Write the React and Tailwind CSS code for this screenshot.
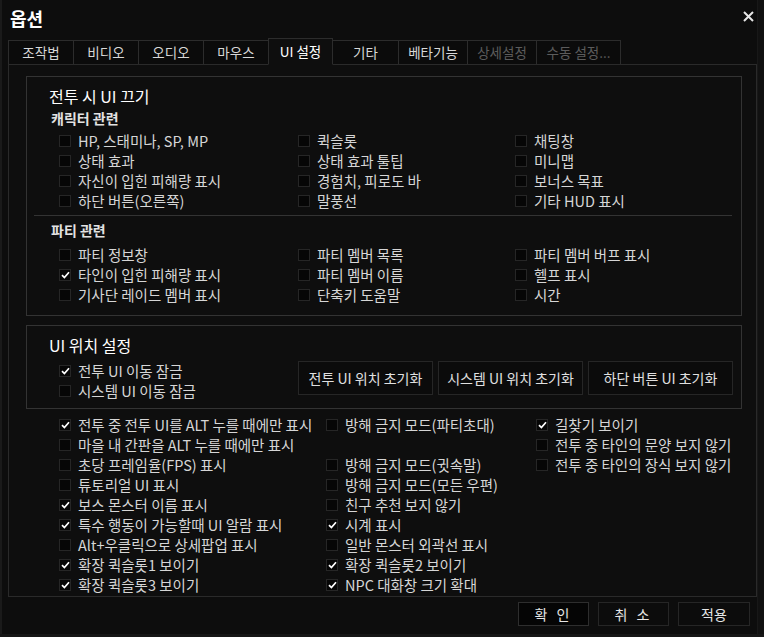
import React from 'react';

const FONT = { fontFamily: '"Noto Sans CJK KR", "Noto Sans", sans-serif' };

const tabs = [
  { label: '조작법', w: 'w-[66px]' },
  { label: '비디오', w: 'w-[66px]' },
  { label: '오디오', w: 'w-[66px]' },
  { label: '마우스', w: 'w-[66px]' },
  { label: 'UI 설정', w: 'w-[65px]', active: true },
  { label: '기타', w: 'w-[67px]' },
  { label: '베타기능', w: 'w-[70px]' },
  { label: '상세설정', w: 'w-[70px]', disabled: true },
  { label: '수동 설정...', w: 'w-[85px]', disabled: true },
];

const charRows = [
  ['HP, 스태미나, SP, MP', '퀵슬롯', '채팅창'],
  ['상태 효과', '상태 효과 툴팁', '미니맵'],
  ['자신이 입힌 피해량 표시', '경험치, 피로도 바', '보너스 목표'],
  ['하단 버튼(오른쪽)', '말풍선', '기타 HUD 표시'],
];

const partyRows = [
  ['파티 정보창', '파티 멤버 목록', '파티 멤버 버프 표시'],
  [['타인이 입힌 피해량 표시', true], '파티 멤버 이름', '헬프 표시'],
  ['기사단 레이드 멤버 표시', '단축키 도움말', '시간'],
];

// [label, checked] or null for an empty cell
const miscRows = [
  [['전투 중 전투 UI를 ALT 누를 때에만 표시', true], ['방해 금지 모드(파티초대)', false], ['길찾기 보이기', true]],
  [['마을 내 간판을 ALT 누를 때에만 표시', false], null, ['전투 중 타인의 문양 보지 않기', false]],
  [['초당 프레임율(FPS) 표시', false], ['방해 금지 모드(귓속말)', false], ['전투 중 타인의 장식 보지 않기', false]],
  [['튜토리얼 UI 표시', false], ['방해 금지 모드(모든 우편)', false], null],
  [['보스 몬스터 이름 표시', true], ['친구 추천 보지 않기', false], null],
  [['특수 행동이 가능할때 UI 알람 표시', true], ['시계 표시', true], null],
  [['Alt+우클릭으로 상세팝업 표시', false], ['일반 몬스터 외곽선 표시', false], null],
  [['확장 퀵슬롯1 보이기', true], ['확장 퀵슬롯2 보이기', true], null],
  [['확장 퀵슬롯3 보이기', true], ['NPC 대화창 크기 확대', true], null],
];

function Check({ label, checked }) {
  return (
    <div className="flex items-center h-[20px] gap-[7px] whitespace-nowrap">
      <span className="w-[12px] h-[12px] border border-[#262626] bg-[#060606] flex items-center justify-center shrink-0">
        {checked && (
          <svg width="9" height="8" viewBox="0 0 9 8">
            <path d="M1 4.2 L3.4 6.6 L8 1.2" stroke="#ffffff" strokeWidth="1.7" fill="none" />
          </svg>
        )}
      </span>
      <span className="text-[14.5px] text-[#d6d6d6] leading-[20px]">{label}</span>
    </div>
  );
}

function CheckGrid({ rows, cols }) {
  return (
    <div className={`grid ${cols}`}>
      {rows.flatMap((row, i) =>
        row.map((cell, j) => {
          const [label, checked] = Array.isArray(cell) ? cell : [cell, false];
          return <Check key={`${i}-${j}`} label={label} checked={checked} />;
        })
      )}
    </div>
  );
}

function Btn({ children, w }) {
  return (
    <button className={`${w} h-[34px] border border-[#262626] bg-[#0b0b0b] text-[14px] text-[#e0e0e0] flex items-center justify-center`}>
      {children}
    </button>
  );
}

export default function App() {
  return (
    <div style={FONT} className="w-[764px] h-[637px] bg-[#0d0d0d] flex flex-col relative overflow-hidden">
      {/* window frame edges */}
      <div className="absolute left-0 top-0 bottom-0 w-[2px] bg-[#1a1a1a]" />
      <div className="absolute right-0 top-0 bottom-0 w-[7px] bg-[#111111] border-l border-[#181818]" />
      <div className="absolute left-0 right-0 bottom-0 h-[3px] bg-[#161616]" />

      {/* title bar */}
      <div className="h-[39px] flex items-start justify-between pl-[10px] pr-[10px] pt-[6px]">
        <span className="text-[18px] text-white font-bold leading-[24px]">옵션</span>
        <svg width="11" height="11" viewBox="0 0 11 11" className="mt-[5px]">
          <path d="M1 1 L10 10 M10 1 L1 10" stroke="#e6e6e6" strokeWidth="2" />
        </svg>
      </div>

      {/* tabs */}
      <div className="flex items-end pl-[8px] h-[26px]">
        {tabs.map((t) => (
          <div
            key={t.label}
            className={`${t.w} border border-[#2c2c2c] -ml-px first:ml-0 flex items-center justify-center text-[13.5px] whitespace-nowrap ${
              t.active ? 'h-[27px] bg-[#0e0e0e] border-b-[#0e0e0e] text-white relative z-10' : 'h-[25px] bg-[#0b0b0b]'
            } ${t.disabled ? 'text-[#5c5c5c]' : t.active ? '' : 'text-[#d8d8d8]'}`}
          >
            {t.label}
          </div>
        ))}
      </div>

      {/* content panel */}
      <div className="ml-[8px] mr-[7px] h-[533px] border border-[#2a2a2a] -mt-px bg-[#0e0e0e] flex flex-col pt-[11px]">
        {/* 전투 시 UI 끄기 */}
        <div className="ml-[17px] w-[716px] h-[240px] border border-[#333333] flex flex-col">
          <div className="pl-[22px] pt-[8px] text-[16px] text-white leading-[22px]">전투 시 UI 끄기</div>
          <div className="pl-[24px] text-[14px] font-bold text-[#e2e2e2] leading-[20px] mt-[1px]">캐릭터 관련</div>
          <div className="pl-[32px] mt-[3px]">
            <CheckGrid rows={charRows} cols="grid-cols-[239px_217px_1fr]" />
          </div>
          <div className="h-px bg-[#333333] ml-[7px] mr-[9px] mt-[4px]" />
          <div className="pl-[24px] text-[14px] font-bold text-[#e2e2e2] leading-[20px] mt-[4px]">파티 관련</div>
          <div className="pl-[32px] mt-[5px]">
            <CheckGrid rows={partyRows} cols="grid-cols-[239px_217px_1fr]" />
          </div>
        </div>

        {/* UI 위치 설정 */}
        <div className="ml-[17px] mt-[9px] w-[716px] h-[84px] border border-[#333333] flex flex-col">
          <div className="pl-[22px] pt-[8px] text-[16px] text-white leading-[22px]">UI 위치 설정</div>
          <div className="flex mt-[5px]">
            <div className="pl-[32px] w-[271px] flex flex-col">
              <Check label="전투 UI 이동 잠금" checked />
              <Check label="시스템 UI 이동 잠금" />
            </div>
            <div className="flex gap-[5px]">
              <Btn w="w-[135px]">전투 UI 위치 초기화</Btn>
              <Btn w="w-[145px]">시스템 UI 위치 초기화</Btn>
              <Btn w="w-[145px]">하단 버튼 UI 초기화</Btn>
            </div>
          </div>
        </div>

        {/* misc options */}
        <div className="pl-[50px] mt-[6px]">
          <div className="grid grid-cols-[267px_210px_1fr]">
            {miscRows.flatMap((row, i) =>
              row.map((cell, j) =>
                cell ? (
                  <Check key={`${i}-${j}`} label={cell[0]} checked={cell[1]} />
                ) : (
                  <div key={`${i}-${j}`} className="h-[20px]" />
                )
              )
            )}
          </div>
        </div>
      </div>

      {/* footer buttons */}
      <div className="flex justify-end gap-[9px] pr-[14px] pt-[5px]">
        <button className="w-[71px] h-[24px] border border-[#2e2e2e] bg-[#050505] text-[14px] text-[#e6e6e6] tracking-[3px] flex items-center justify-center">확 인</button>
        <button className="w-[71px] h-[24px] border border-[#262626] bg-[#0c0c0c] text-[14px] text-[#e6e6e6] tracking-[3px] flex items-center justify-center">취 소</button>
        <button className="w-[72px] h-[24px] border border-[#262626] bg-[#0c0c0c] text-[14px] text-[#e6e6e6] flex items-center justify-center">적용</button>
      </div>
    </div>
  );
}
